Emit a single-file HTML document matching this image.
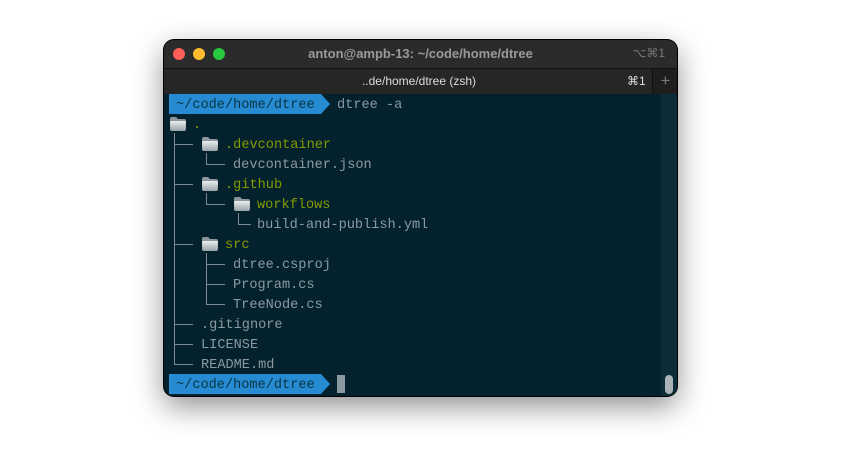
<!DOCTYPE html><html><head><style>
body{margin:0;width:846px;height:449px;background:#fff;position:relative;overflow:hidden;font-family:"Liberation Sans",sans-serif}
.win{position:absolute;left:164px;top:40px;width:513px;height:356px;border-radius:10px;background:#2a2a2a;box-shadow:0 10px 30px rgba(0,0,0,.45),0 0 0 1px #000;overflow:hidden}
.title{position:absolute;left:0;top:0;width:513px;height:28px;background:#2b2b2b;color:#9a9a9a;font-weight:bold;font-size:13px;text-align:center;line-height:27px}
.dot{position:absolute;top:8px;width:12px;height:12px;border-radius:50%}
.tabs{position:absolute;left:0;top:28px;width:513px;height:25px;background:#262626;border-top:1px solid #111;border-bottom:1px solid #111;color:#ddd;font-size:12px;line-height:24px}
.term{position:absolute;left:0;top:54px;width:513px;height:302px;background:#03222d}
.t{position:absolute;font-family:"Liberation Mono",monospace;font-size:13.6px;line-height:20px;padding-top:2px;color:#8c9aa0;white-space:pre}
.g{color:#859900}
.l{position:absolute;background:#7d8b90}
.f{position:absolute;width:18px;height:16px}
</style></head><body>
<div class="win">
<div class="title">anton@ampb-13: ~/code/home/dtree<span style="position:absolute;right:12px;font-weight:normal;color:#777;font-size:12px">⌥⌘1</span></div>
<div class="dot" style="left:9px;background:#fe5f57"></div><div class="dot" style="left:29px;background:#febc2e"></div><div class="dot" style="left:49px;background:#28c840"></div>
<div class="tabs"><span style="position:absolute;left:170px;width:170px;text-align:center">..de/home/dtree (zsh)</span><span style="position:absolute;left:463px">⌘1</span><div style="position:absolute;left:488px;top:0;width:25px;height:25px;border-left:1px solid #111;background:#1e1e1e;color:#777;text-align:center;font-size:17px">+</div></div>
<div class="term"><div style="position:absolute;right:0;top:0;width:16px;height:302px;background:#0b2d38"></div><div style="position:absolute;right:4px;top:281px;width:8px;height:19px;border-radius:4px;background:#a9b2b4"></div></div>
</div>
<div style="position:absolute;left:169px;top:94px;width:144px;height:20px;background:#268bd2"></div>
<svg style="position:absolute;left:313px;top:94px" width="18" height="20"><polygon points="0,0 8,0 17,10 8,20 0,20" fill="#268bd2"/></svg>
<div class="t" style="left:176px;top:94px;color:#073642">~/code/home/dtree</div>
<div class="t" style="left:337px;top:94px">dtree -a</div>
<div style="position:absolute;left:169px;top:374px;width:144px;height:20px;background:#268bd2"></div>
<svg style="position:absolute;left:313px;top:374px" width="18" height="20"><polygon points="0,0 8,0 17,10 8,20 0,20" fill="#268bd2"/></svg>
<div class="t" style="left:176px;top:374px;color:#073642">~/code/home/dtree</div>
<div style="position:absolute;left:337px;top:375px;width:8px;height:18px;background:#8c9aa0"></div>

<svg width="0" height="0" style="position:absolute"><defs><linearGradient id="fg" x1="0" y1="0" x2="0" y2="1"><stop offset="0" stop-color="#e8ecee"/><stop offset="1" stop-color="#9aa4a8"/></linearGradient><symbol id="fd" viewBox="0 0 18 16"><path d="M1 3 Q1 1 3 1 L7 1 L9 3 L15 3 Q17 3 17 5 L17 13 Q17 15 15 15 L3 15 Q1 15 1 13 Z" fill="#8d979b"/><path d="M1 6 Q1 5 2.5 5 L15.5 5 Q17 5 17 6 L16.5 13.5 Q16.5 15 15 15 L3 15 Q1.5 15 1.5 13.5 Z" fill="url(#fg)"/></symbol></defs></svg>
<svg class="f" style="left:169px;top:116px"><use href="#fd"/></svg>
<svg class="f" style="left:201px;top:136px"><use href="#fd"/></svg>
<svg class="f" style="left:201px;top:176px"><use href="#fd"/></svg>
<svg class="f" style="left:233px;top:196px"><use href="#fd"/></svg>
<svg class="f" style="left:201px;top:236px"><use href="#fd"/></svg>

<div class="t g" style="left:193px;top:114px">.</div>
<div class="t g" style="left:225px;top:134px">.devcontainer</div>
<div class="t" style="left:233px;top:154px">devcontainer.json</div>
<div class="t g" style="left:225px;top:174px">.github</div>
<div class="t g" style="left:257px;top:194px">workflows</div>
<div class="t" style="left:257px;top:214px">build-and-publish.yml</div>
<div class="t g" style="left:225px;top:234px">src</div>
<div class="t" style="left:233px;top:254px">dtree.csproj</div>
<div class="t" style="left:233px;top:274px">Program.cs</div>
<div class="t" style="left:233px;top:294px">TreeNode.cs</div>
<div class="t" style="left:201px;top:314px">.gitignore</div>
<div class="t" style="left:201px;top:334px">LICENSE</div>
<div class="t" style="left:201px;top:354px">README.md</div>

<div class="l" style="left:174px;top:133px;width:1px;height:232px"></div>
<div class="l" style="left:174px;top:144px;width:19px;height:1px"></div>
<div class="l" style="left:174px;top:184px;width:19px;height:1px"></div>
<div class="l" style="left:174px;top:244px;width:19px;height:1px"></div>
<div class="l" style="left:174px;top:324px;width:19px;height:1px"></div>
<div class="l" style="left:174px;top:344px;width:19px;height:1px"></div>
<div class="l" style="left:174px;top:364px;width:19px;height:1px"></div>
<div class="l" style="left:206px;top:153px;width:1px;height:12px"></div>
<div class="l" style="left:206px;top:164px;width:19px;height:1px"></div>
<div class="l" style="left:206px;top:193px;width:1px;height:12px"></div>
<div class="l" style="left:206px;top:204px;width:19px;height:1px"></div>
<div class="l" style="left:238px;top:213px;width:1px;height:12px"></div>
<div class="l" style="left:238px;top:224px;width:13px;height:1px"></div>
<div class="l" style="left:206px;top:253px;width:1px;height:52px"></div>
<div class="l" style="left:206px;top:264px;width:19px;height:1px"></div>
<div class="l" style="left:206px;top:284px;width:19px;height:1px"></div>
<div class="l" style="left:206px;top:304px;width:19px;height:1px"></div>
</body></html>
